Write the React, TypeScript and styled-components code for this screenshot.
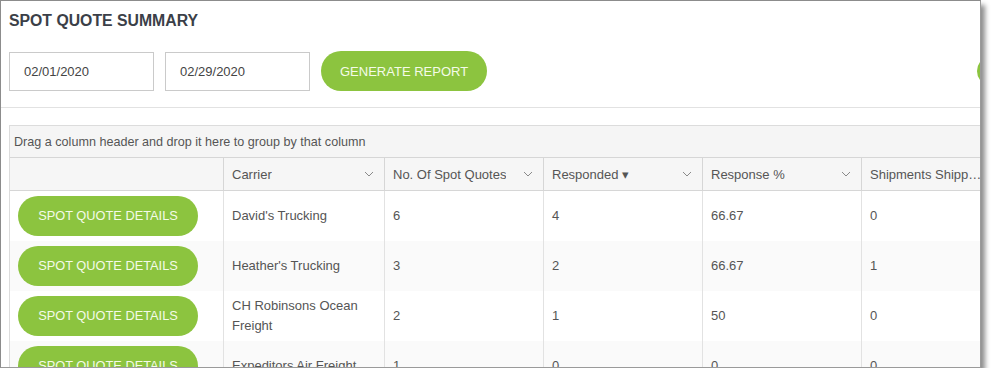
import React from "react";
import styled, { createGlobalStyle } from "styled-components";

const GlobalStyle = createGlobalStyle`
    html, body {
        margin: 0;
        padding: 0;
        background: #ffffff;
    }
    body {
        font-family: "Liberation Sans", Arial, sans-serif;
    }
`;

const GREEN = "#8cc43f";

interface Quote {
    carrier: string;
    quotes: number;
    responded: number;
    percent: string;
    shipped: number;
}

const QUOTES: Quote[] = [
    { carrier: "David's Trucking", quotes: 6, responded: 4, percent: "66.67", shipped: 0 },
    { carrier: "Heather's Trucking", quotes: 3, responded: 2, percent: "66.67", shipped: 1 },
    { carrier: "CH Robinsons Ocean Freight", quotes: 2, responded: 1, percent: "50", shipped: 0 },
    { carrier: "Expeditors Air Freight", quotes: 1, responded: 0, percent: "0", shipped: 0 },
];

const COLUMNS = [
    { label: "", width: 214, menu: false, clip: false },
    { label: "Carrier", width: 161, menu: true, clip: false },
    { label: "No. Of Spot Quotes", width: 159, menu: true, clip: false },
    { label: "Responded ▾", width: 159, menu: true, clip: false },
    { label: "Response %", width: 159, menu: true, clip: false },
    { label: "Shipments Shipped", width: 159, menu: true, clip: true },
];

const Chevron: React.FC = () => (
    <svg width="10" height="6" viewBox="0 0 10 6" fill="none">
        <path d="M1 1l4 4 4-4" stroke="#8a8a8a" strokeWidth="1" />
    </svg>
);

const App: React.FC = () => {
    return (
        <>
            <GlobalStyle />
            <Window>
                <Inner>
                    <Header>
                        <Title>SPOT QUOTE SUMMARY</Title>
                        <Toolbar>
                            <DateBox>02/01/2020</DateBox>
                            <DateBox>02/29/2020</DateBox>
                            <PillButton>GENERATE REPORT</PillButton>
                            <ExportButton aria-label="Export" />
                        </Toolbar>
                    </Header>
                    <Grid>
                        <GroupPanel>
                            Drag a column header and drop it here to group by that column
                        </GroupPanel>
                        <HeaderRow>
                            {COLUMNS.map((col, index) => (
                                <HeaderCell key={index} $width={col.width}>
                                    <HeaderLabel $clip={col.clip}>{col.label}</HeaderLabel>
                                    {col.menu && <Chevron />}
                                </HeaderCell>
                            ))}
                        </HeaderRow>
                        {QUOTES.map((quote, index) => (
                            <Row key={index} $alt={index % 2 === 1}>
                                <ButtonCell $width={COLUMNS[0].width}>
                                    <DetailsButton>SPOT QUOTE DETAILS</DetailsButton>
                                </ButtonCell>
                                <Cell $width={COLUMNS[1].width}>{quote.carrier}</Cell>
                                <Cell $width={COLUMNS[2].width}>{quote.quotes}</Cell>
                                <Cell $width={COLUMNS[3].width}>{quote.responded}</Cell>
                                <Cell $width={COLUMNS[4].width}>{quote.percent}</Cell>
                                <Cell $width={COLUMNS[5].width}>{quote.shipped}</Cell>
                            </Row>
                        ))}
                    </Grid>
                </Inner>
            </Window>
        </>
    );
};

interface WidthProps {
    $width: number;
}

interface RowProps {
    $alt: boolean;
}

interface LabelProps {
    $clip: boolean;
}

const Window = styled.div`
    width: 979px;
    height: 366px;
    border-left: 1px solid #8c8c8c;
    border-top: 1px solid #8c8c8c;
    border-right: 1px solid #9a9a9a;
    border-bottom: 1px solid #9a9a9a;
    box-shadow: 4px 5px 5px rgba(0, 0, 0, 0.45);
    overflow: hidden;
    background: #ffffff;
`;

const Inner = styled.div`
    width: 1200px;
`;

const Header = styled.div`
    border-bottom: 1px solid #e2e2e2;
    padding: 11px 0 16px 8px;
`;

const Title = styled.h1`
    margin: 0;
    font-size: 15.8px;
    font-weight: 700;
    color: #3b3f48;
    line-height: 18px;
`;

const Toolbar = styled.div`
    display: flex;
    align-items: center;
    gap: 11px;
    margin-top: 21px;
`;

const DateBox = styled.div`
    box-sizing: border-box;
    width: 145px;
    height: 39px;
    border: 1px solid #cacaca;
    padding-left: 14px;
    display: flex;
    align-items: center;
    font-size: 13px;
    color: #444;
`;

const PillButton = styled.div`
    box-sizing: border-box;
    height: 40px;
    padding: 0 19px;
    border-radius: 20px;
    background: ${GREEN};
    color: #f4fbe8;
    font-size: 13px;
    display: flex;
    align-items: center;
    justify-content: center;
    white-space: nowrap;
`;

const ExportButton = styled(PillButton)`
    margin-left: 479px;
    width: 40px;
    height: 30px;
    padding: 0;
`;

const Grid = styled.div`
    margin: 17px 0 0 8px;
    border-left: 1px solid #dcdcdc;
    color: #555;
    font-size: 13px;
`;

const GroupPanel = styled.div`
    height: 31px;
    border-top: 1px solid #dcdcdc;
    background: #f5f5f5;
    padding-left: 4px;
    display: flex;
    align-items: center;
    font-size: 12.6px;
    color: #555;
`;

const HeaderRow = styled.div`
    display: flex;
    height: 32px;
    background: #f6f6f6;
    border-top: 1px solid #d6d6d6;
    border-bottom: 1px solid #d6d6d6;
`;

const HeaderCell = styled.div<WidthProps>`
    box-sizing: border-box;
    flex: 0 0 ${({ $width }) => $width}px;
    display: flex;
    align-items: center;
    justify-content: space-between;
    gap: 6px;
    padding: 0 10px 0 8px;
    border-right: 1px solid #d6d6d6;
`;

const HeaderLabel = styled.span<LabelProps>`
    max-width: ${({ $clip }) => ($clip ? "112px" : "none")};
    white-space: nowrap;
    overflow: hidden;
    text-overflow: ellipsis;
`;

const Row = styled.div<RowProps>`
    display: flex;
    height: 50px;
    background: ${({ $alt }) => ($alt ? "#fafafa" : "#ffffff")};
`;

const Cell = styled.div<WidthProps>`
    box-sizing: border-box;
    flex: 0 0 ${({ $width }) => $width}px;
    display: flex;
    align-items: center;
    padding: 0 8px;
    line-height: 20px;
    border-right: 1px solid #e2e2e2;
`;

const ButtonCell = styled(Cell)`
    padding: 0 0 0 8px;
`;

const DetailsButton = styled(PillButton)`
    width: 180px;
    padding: 0;
    font-size: 12.8px;
`;

export default App;
